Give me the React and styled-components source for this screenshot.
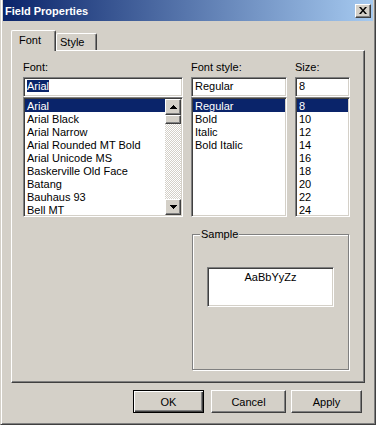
import React from 'react';
import styled, { createGlobalStyle } from 'styled-components';

const GlobalStyle = createGlobalStyle`
  html, body {
    margin: 0;
    padding: 0;
    background: #d4d0c8;
  }
  body {
    font-family: "Liberation Sans", Arial, sans-serif;
    font-size: 11px;
    color: #000;
  }
  * { box-sizing: border-box; }
`;

const Window = styled.div`
  width: 376px;
  height: 425px;
  background: #d4d0c8;
  border-left: 1px solid #d4d0c8;
  border-right: 1px solid #404040;
  border-bottom: 1px solid #404040;
  box-shadow: inset 1px 0 #fff, inset -1px -1px #808080;
  padding: 0 2px 2px 2px;
  display: flex;
  flex-direction: column;
`;

const TitleBar = styled.div`
  flex: none;
  height: 21px;
  padding: 0 2px;
  display: flex;
  align-items: center;
  justify-content: space-between;
  background: linear-gradient(to right, #0a246a, #a6caf0);
  color: #fff;
  font-weight: bold;
  font-size: 11px;
`;

const raised = `
  background: #d4d0c8;
  border-top: 1px solid #fff;
  border-left: 1px solid #fff;
  border-right: 1px solid #404040;
  border-bottom: 1px solid #404040;
  box-shadow: inset -1px -1px #808080;
`;

const sunken = `
  background: #fff;
  border-top: 1px solid #808080;
  border-left: 1px solid #808080;
  border-right: 1px solid #fff;
  border-bottom: 1px solid #fff;
  box-shadow: inset 1px 1px #404040, inset -1px -1px #d4d0c8;
`;

const CloseButton = styled.div`
  ${raised}
  width: 16px;
  height: 14px;
  display: flex;
  align-items: center;
  justify-content: center;
`;

const Body = styled.div`
  flex: 1;
  padding: 9px 8px 0 8px;
  display: flex;
  flex-direction: column;
`;

const TabRow = styled.div`
  height: 20px;
  display: flex;
  align-items: flex-end;
  position: relative;
  z-index: 1;
`;

const Tab = styled.div`
  width: ${p => p.$w}px;
  height: ${p => (p.$active ? 21 : 17)}px;
  margin-bottom: ${p => (p.$active ? -1 : 0)}px;
  padding: ${p => (p.$active ? '3px 0 0 7px' : '2px 0 0 3px')};
  background: #d4d0c8;
  border-top: 1px solid #fff;
  border-left: 1px solid #fff;
  border-right: 1px solid #404040;
  box-shadow: inset -1px 0 #808080;
  border-radius: 2px 2px 0 0;
  line-height: 13px;
`;

const Panel = styled.div`
  ${raised}
  flex: none;
  height: 333px;
  padding: 9px 0 0 11px;
  display: grid;
  grid-template-columns: 160px 96px 55px;
  column-gap: 8px;
  align-content: start;
`;

const Label = styled.div`
  line-height: 14px;
  margin-bottom: 3px;
`;

const Field = styled.div`
  ${sunken}
  height: 20px;
  padding: 1px 3px 0 3px;
  line-height: 14px;
  white-space: nowrap;
  overflow: hidden;
`;

const Selected = styled.span`
  background: #0a246a;
  color: #fff;
`;

const List = styled.div`
  ${sunken}
  height: 120px;
  padding: 1px;
  display: flex;
  overflow: hidden;
`;

const Items = styled.div`
  flex: 1;
  min-width: 0;
  overflow: hidden;
`;

const Item = styled.div`
  height: 13px;
  line-height: 12px;
  padding: 1px 0 0 2px;
  white-space: nowrap;
  background: ${p => (p.$selected ? '#0a246a' : 'transparent')};
  color: ${p => (p.$selected ? '#fff' : '#000')};
`;

const ScrollBar = styled.div`
  width: 16px;
  flex: none;
  display: flex;
  flex-direction: column;
`;

const ScrollButton = styled.div`
  ${raised}
  height: 16px;
  flex: none;
  display: flex;
  align-items: center;
  justify-content: center;
`;

const Thumb = styled.div`
  ${raised}
  height: 9px;
  flex: none;
`;

const Track = styled.div`
  flex: 1;
  background: repeating-conic-gradient(#fff 0 25%, #d4d0c8 0 50%) 0 0 / 2px 2px;
`;

const Group = styled.fieldset`
  grid-column: 2 / 4;
  margin: 11px 0 0 1px;
  width: 157px;
  height: 142px;
  padding: 0 0 0 7px;
  border: 1px solid #808080;
  box-shadow: inset 1px 1px #fff, 1px 1px #fff;
`;

const Legend = styled.legend`
  padding: 0 1px;
  line-height: 13px;
  background: #d4d0c8;
`;

const SampleBox = styled.div`
  ${sunken}
  width: 127px;
  height: 40px;
  margin: 26px 0 0 7px;
  padding-top: 3px;
  text-align: center;
  line-height: 13px;
`;

const ButtonRow = styled.div`
  margin-top: 7px;
  padding-right: 3px;
  display: flex;
  justify-content: flex-end;
`;

const Button = styled.div`
  width: ${p => p.$w}px;
  height: 23px;
  margin-left: ${p => p.$gap || 0}px;
  display: flex;
  align-items: center;
  justify-content: center;
  background: #d4d0c8;
  ${p =>
    p.$default
      ? `border: 1px solid #000;
         box-shadow: inset 1px 1px #fff, inset -1px -1px #404040, inset -2px -2px #808080;`
      : `border-top: 1px solid #fff;
         border-left: 1px solid #fff;
         border-right: 1px solid #404040;
         border-bottom: 1px solid #404040;
         box-shadow: inset -1px -1px #808080;`}
`;

const Arrow = ({ down }) => (
  <svg width="7" height="4" viewBox="0 0 7 4" shapeRendering="crispEdges">
    <polygon points={down ? '0,0 7,0 3.5,4' : '3.5,0 7,4 0,4'} fill="#000" />
  </svg>
);

const fonts = [
  'Arial',
  'Arial Black',
  'Arial Narrow',
  'Arial Rounded MT Bold',
  'Arial Unicode MS',
  'Baskerville Old Face',
  'Batang',
  'Bauhaus 93',
  'Bell MT',
];
const styles = ['Regular', 'Bold', 'Italic', 'Bold Italic'];
const sizes = ['8', '10', '12', '14', '16', '18', '20', '22', '24'];

export default function App() {
  return (
    <>
      <GlobalStyle />
      <Window>
        <TitleBar>
          <span>Field Properties</span>
          <CloseButton>
            <svg width="8" height="7" viewBox="0 0 8 7">
              <path d="M0 0h2l2 2.4L6 0h2L5 3.5 8 7H6L4 4.6 2 7H0l3-3.5z" fill="#000" />
            </svg>
          </CloseButton>
        </TitleBar>
        <Body>
          <TabRow>
            <Tab $active $w={45}>Font</Tab>
            <Tab $w={41}>Style</Tab>
          </TabRow>
          <Panel>
            <Label>Font:</Label>
            <Label>Font style:</Label>
            <Label>Size:</Label>

            <Field><Selected>Arial</Selected></Field>
            <Field>Regular</Field>
            <Field>8</Field>

            <List>
              <Items>
                {fonts.map((f, i) => (
                  <Item key={f} $selected={i === 0}>{f}</Item>
                ))}
              </Items>
              <ScrollBar>
                <ScrollButton><Arrow /></ScrollButton>
                <Thumb />
                <Track />
                <ScrollButton><Arrow down /></ScrollButton>
              </ScrollBar>
            </List>
            <List>
              <Items>
                {styles.map((s, i) => (
                  <Item key={s} $selected={i === 0}>{s}</Item>
                ))}
              </Items>
            </List>
            <List>
              <Items>
                {sizes.map((s, i) => (
                  <Item key={s} $selected={i === 0}>{s}</Item>
                ))}
              </Items>
            </List>

            <Group>
              <Legend>Sample</Legend>
              <SampleBox>AaBbYyZz</SampleBox>
            </Group>
          </Panel>
          <ButtonRow>
            <Button $default $w={71}>OK</Button>
            <Button $w={75} $gap={7}>Cancel</Button>
            <Button $w={71} $gap={5}>Apply</Button>
          </ButtonRow>
        </Body>
      </Window>
    </>
  );
}
